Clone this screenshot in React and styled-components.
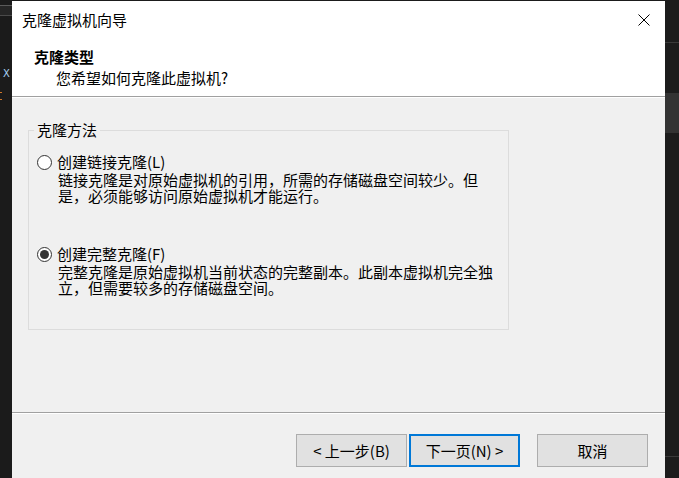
import React from 'react';
import styled, { createGlobalStyle } from 'styled-components';

const GlobalStyle = createGlobalStyle`
  html, body {
    margin: 0;
    padding: 0;
    background: #1b1b1b;
  }
  body {
    font-family: "Noto Sans CJK SC", "Noto Sans", sans-serif;
    color: #000;
  }
  #root {
    width: 679px;
    height: 478px;
    overflow: hidden;
  }
`;

const Screen = styled.div`
  display: flex;
  width: 679px;
  height: 478px;
  background: #1b1b1b;
`;

/* bits of the window behind the dialog */
const LeftStrip = styled.div`
  width: 12px;
  flex-shrink: 0;
  display: flex;
  flex-direction: column;
`;

const BackTab = styled.div`
  height: 9px;
  margin-top: 5px;
  background: #262626;
  border-top: 1px solid #5a5a5a;
  border-bottom: 1px solid #4a4a4a;
`;

const BackClose = styled.span`
  margin-top: 52px;
  padding-left: 3px;
  font-family: "DejaVu Sans", sans-serif;
  font-size: 10px;
  line-height: 12px;
  color: #a9d3f5;
`;

const OrangeMark = styled.span`
  width: 2px;
  height: 1px;
  margin-top: ${(p) => p.$gap}px;
  background: #d0782a;
`;

const RightStrip = styled.div`
  flex: 1;
  display: flex;
  flex-direction: column;
  background: #1c1c1c;
`;

const RightLine = styled.div`
  height: 1px;
  margin-top: ${(p) => p.$top}px;
  background: #3a3a3a;
`;

const RightPanel = styled.div`
  height: 40px;
  margin-top: 50px;
  background: #333;
`;

const Dialog = styled.div`
  width: 653px;
  flex-shrink: 0;
  margin-top: 1px;
  display: flex;
  flex-direction: column;
  background: #f0f0f0;
`;

const TitleBar = styled.div`
  height: 38px;
  display: flex;
  align-items: center;
  justify-content: space-between;
  padding: 0 15px 0 10px;
  background: #fff;
  font-size: 15px;
  line-height: 18px;
`;

const CloseButton = styled.span`
  display: flex;
  width: 12px;
  height: 12px;
  margin-top: -1px;
`;

const Header = styled.div`
  height: 57px;
  box-sizing: border-box;
  padding: 9px 0 0 22px;
  background: #fff;
`;

const Heading = styled.div`
  font-size: 15px;
  line-height: 18px;
  font-weight: 700;
`;

const SubHeading = styled.div`
  margin: 3px 0 0 22px;
  font-size: 15px;
  line-height: 18px;
`;

const Divider = styled.div`
  height: 0;
  border-top: 1px solid #a0a0a0;
  border-bottom: 1px solid #fff;
`;

const Body = styled.div`
  flex: 1;
  padding: 23px 0 0 16px;
`;

const GroupBox = styled.fieldset`
  width: 481px;
  box-sizing: border-box;
  margin: 0;
  padding: 14px 0 33px 8px;
  border: 1px solid #dcdcdc;
`;

const GroupTitle = styled.legend`
  padding: 0 3px;
  margin-left: -3px;
  font-size: 15px;
  line-height: 18px;
`;

const Option = styled.div`
  margin-top: ${(p) => (p.$first ? 0 : 41)}px;
`;

const OptionLabel = styled.label`
  display: flex;
  align-items: center;
  gap: 5px;
  font-size: 15px;
  line-height: 18px;
`;

const Radio = styled.span`
  width: 15px;
  height: 15px;
  flex-shrink: 0;
  box-sizing: border-box;
  border-radius: 50%;
  border: 1px solid #333;
  background: #fff;
  display: flex;
  align-items: center;
  justify-content: center;
  &::after {
    content: '';
    width: 9px;
    height: 9px;
    border-radius: 50%;
    background: ${(p) => (p.$checked ? '#333' : 'transparent')};
  }
`;

const Desc = styled.div`
  margin: 1px 0 0 21px;
  font-size: 15px;
  line-height: 16px;
  white-space: pre;
`;

const Footer = styled.div`
  height: 64px;
  box-sizing: border-box;
  display: flex;
  justify-content: flex-end;
  align-items: flex-start;
  padding: 20px 17px 0 0;
`;

const Button = styled.button`
  width: 111px;
  height: 33px;
  margin-left: ${(p) => p.$gap || 0}px;
  box-sizing: border-box;
  border: ${(p) => (p.$default ? '2px solid #0078d7' : '1px solid #adadad')};
  background: #e1e1e1;
  font-family: "Noto Sans CJK SC", "Noto Sans", sans-serif;
  font-size: 15px;
  line-height: 18px;
  color: #000;
  padding: 0;
`;

const options = [
  {
    id: 'linked',
    label: '创建链接克隆',
    key: 'L',
    text: '链接克隆是对原始虚拟机的引用，所需的存储磁盘空间较少。但\n是，必须能够访问原始虚拟机才能运行。',
  },
  {
    id: 'full',
    label: '创建完整克隆',
    key: 'F',
    checked: true,
    text: '完整克隆是原始虚拟机当前状态的完整副本。此副本虚拟机完全独\n立，但需要较多的存储磁盘空间。',
  },
];

const App = () => {
  return (
    <>
      <GlobalStyle />
      <Screen>
        <LeftStrip>
          <BackTab />
          <BackClose>X</BackClose>
          <OrangeMark $gap={12} />
          <OrangeMark $gap={6} />
        </LeftStrip>

        <Dialog>
          <TitleBar>
            <span>克隆虚拟机向导</span>
            <CloseButton>
              <svg width="12" height="12" viewBox="0 0 12 12">
                <path d="M0.5 0.5 L11.5 11.5 M11.5 0.5 L0.5 11.5" stroke="#000" strokeWidth="1" fill="none" />
              </svg>
            </CloseButton>
          </TitleBar>
          <Header>
            <Heading>克隆类型</Heading>
            <SubHeading>您希望如何克隆此虚拟机?</SubHeading>
          </Header>
          <Divider />

          <Body>
            <GroupBox>
              <GroupTitle>克隆方法</GroupTitle>
              {options.map((opt, i) => (
                <Option key={opt.id} $first={i === 0}>
                  <OptionLabel>
                    <Radio $checked={opt.checked} />
                    <span>{`${opt.label}(${opt.key})`}</span>
                  </OptionLabel>
                  <Desc>{opt.text}</Desc>
                </Option>
              ))}
            </GroupBox>
          </Body>

          <Divider />
          <Footer>
            <Button>&lt; 上一步(B)</Button>
            <Button $default $gap={2}>下一页(N) &gt;</Button>
            <Button $gap={17}>取消</Button>
          </Footer>
        </Dialog>

        <RightStrip>
          <RightLine $top={42} />
          <RightPanel />
          <RightLine $top={323} />
        </RightStrip>
      </Screen>
    </>
  );
};

export default App;
